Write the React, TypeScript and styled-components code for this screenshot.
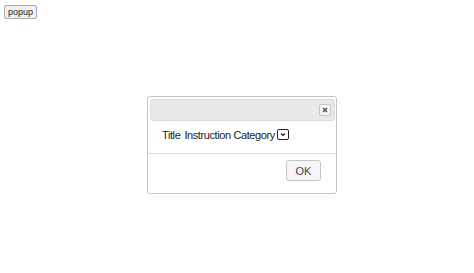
import styled, { createGlobalStyle } from 'styled-components';

const GlobalStyle = createGlobalStyle`
  html, body {
    margin: 0;
    background: #ffffff;
    font-family: "Liberation Sans", Arial, sans-serif;
  }
`;

const Page = styled.div`
  position: relative;
  width: 474px;
  height: 273px;
  padding: 5px 4px;
  box-sizing: border-box;
`;

const OpenButton = styled.button`
  display: block;
  height: 14px;
  width: 33px;
  padding: 0;
  font-family: "Liberation Sans", Arial, sans-serif;
  font-size: 9px;
  line-height: 12px;
  color: #222;
  background: #f0f0f0;
  border: 1px solid #a8a8a8;
  border-radius: 2px;
`;

const Dialog = styled.div`
  position: absolute;
  left: 147px;
  top: 96px;
  width: 190px;
  height: 98px;
  box-sizing: border-box;
  padding: 2px;
  display: flex;
  flex-direction: column;
  background: #ffffff;
  border: 1px solid #c5c5c5;
  border-radius: 3px;
  color: #333333;
`;

const TitleBar = styled.div`
  height: 22px;
  box-sizing: border-box;
  display: flex;
  align-items: center;
  justify-content: flex-end;
  padding-right: 3px;
  margin-right: -1px;
  background: #e9e9e9;
  border: 1px solid #dddddd;
  border-radius: 3px;
`;

const CloseButton = styled.button`
  width: 12px;
  height: 12px;
  padding: 0;
  display: flex;
  align-items: center;
  justify-content: center;
  background: #f6f6f6;
  border: 1px solid #c5c5c5;
  border-radius: 2px;
`;

const Content = styled.div`
  height: 32px;
  box-sizing: border-box;
  display: flex;
  align-items: center;
  padding: 0 0 5px 12px;
  font-size: 11px;
  letter-spacing: -0.4px;
  color: #222;
`;

const Label = styled.span`
  margin-right: 4px;
`;

const SelectWrap = styled.span`
  position: relative;
  display: inline-block;
  margin-left: 2px;
  width: 12px;
  height: 11px;
`;

const Select = styled.select`
  appearance: none;
  width: 12px;
  height: 11px;
  margin: 0;
  padding: 0;
  box-sizing: border-box;
  border: 1px solid #222;
  border-radius: 2px;
  background: #fff;
  display: block;
`;

const Chevron = styled.svg`
  position: absolute;
  left: 3px;
  top: 3px;
  pointer-events: none;
`;

const ButtonPane = styled.div`
  flex: 1;
  display: flex;
  justify-content: flex-end;
  align-items: flex-start;
  padding: 6px 15px 0 0;
  margin: 0 -2px;
  border-top: 1px solid #dddddd;
`;

const OkButton = styled.button`
  width: 35px;
  height: 21px;
  padding: 0;
  font-family: "Liberation Sans", Arial, sans-serif;
  font-size: 11px;
  color: #454545;
  background: #f6f6f6;
  border: 1px solid #c5c5c5;
  border-radius: 3px;
`;

export default function App() {
  return (
    <Page>
      <GlobalStyle />
      <OpenButton>popup</OpenButton>
      <Dialog>
        <TitleBar>
          <CloseButton aria-label="close">
            <svg width="6" height="6" viewBox="0 0 6 6">
              <path d="M1 1L5 5M5 1L1 5" stroke="#555" strokeWidth="1.6" />
            </svg>
          </CloseButton>
        </TitleBar>
        <Content>
          <Label>Title</Label>
          <span>Instruction Category</span>
          <SelectWrap>
            <Select />
            <Chevron width="6" height="5" viewBox="0 0 6 5">
              <path d="M1 1.5L3 3.5L5 1.5" stroke="#222" strokeWidth="1.2" fill="none" />
            </Chevron>
          </SelectWrap>
        </Content>
        <ButtonPane>
          <OkButton>OK</OkButton>
        </ButtonPane>
      </Dialog>
    </Page>
  );
}
